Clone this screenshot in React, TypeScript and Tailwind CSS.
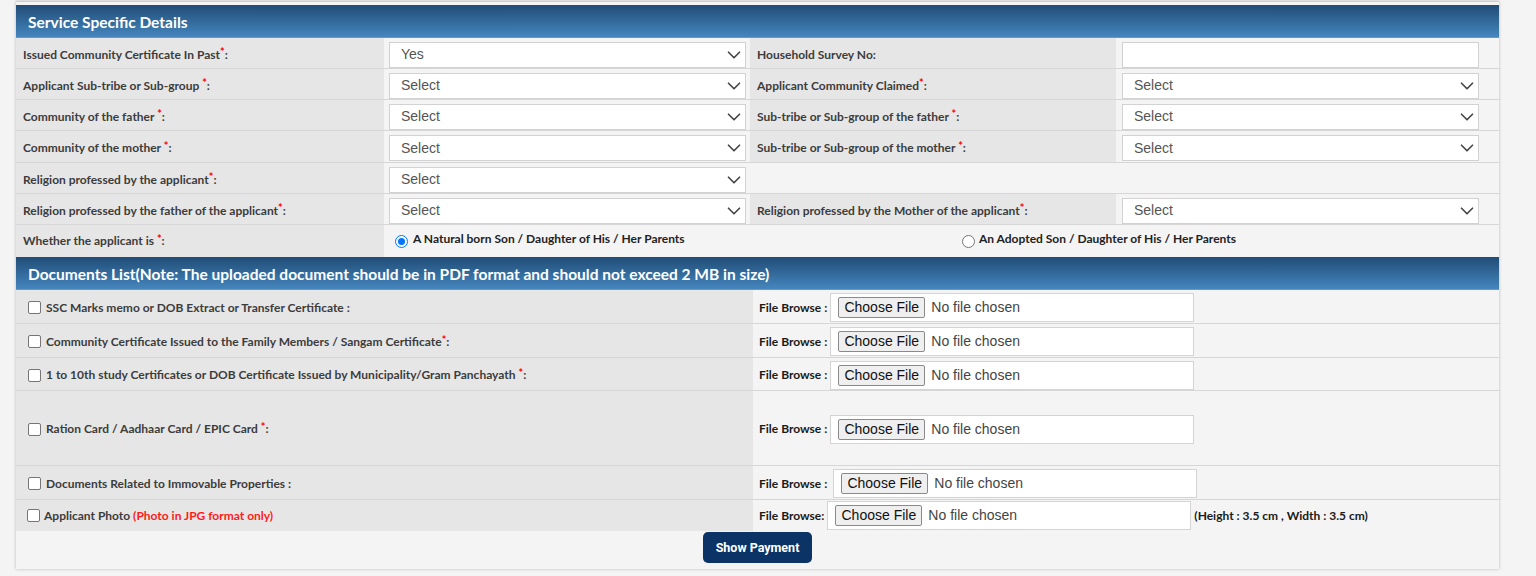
import { ChevronDown } from "lucide-react";
import type { ReactNode } from "react";

const Req = () => (
  <span className="relative -top-[2px] text-[11px] text-[#ff0000]">*</span>
);

const SelectBox = ({ value = "Select" }: { value?: string }) => (
  <div className="flex h-[26px] w-[357px] items-center justify-between border border-[#d2d2d2] bg-white pl-[11px] font-['Liberation_Sans',Arial,sans-serif] text-[14px] text-[#555]">
    <span>{value}</span>
    <ChevronDown className="h-[22px] w-[22px] text-[#444]" strokeWidth={1.8} />
  </div>
);

const Label = ({ children }: { children: ReactNode }) => (
  <div className="flex items-center bg-[#e6e6e6] pl-[7px] text-[12px] font-bold text-[#3c3c3c]">
    {children}
  </div>
);

const Value = ({ children, right }: { children?: ReactNode; right?: boolean }) => (
  <div className={right ? "flex items-center pl-[6px]" : "flex items-center pl-[5px]"}>{children}</div>
);

const Header = ({ title }: { title: string }) => (
  <div className="flex h-[33px] items-center border-b border-[#5b9bd2] bg-linear-to-b from-[#214d77] to-[#4586be] pt-[3px] pl-[12px] text-[15.5px] font-bold text-white">
    {title}
  </div>
);

const Checkbox = () => (
  <span className="h-[13px] w-[13px] shrink-0 rounded-[2px] border border-[#767676] bg-white" />
);

const FileBox = ({ label = "File Browse :", gap = "ml-[3px]" }: { label?: string; gap?: string }) => (
  <div className="flex items-center pl-[6px]">
    <span className="text-[12px] font-bold whitespace-pre text-[#1a1a1a]">{label}</span>
    <div className={`${gap} flex h-[29px] w-[364px] items-center border border-[#d4d4d4] bg-white pl-[7px] font-['Liberation_Sans',Arial,sans-serif] text-[14px]`}>
      <span className="flex h-[21px] w-[87px] items-center justify-center rounded-[2px] border border-[#8a8a8a] bg-[#efefef] text-[#111]">
        Choose File
      </span>
      <span className="ml-[6px] text-[#444]">No file chosen</span>
    </div>
  </div>
);

// cells fill the row; bg lives on the label cells
const rowCls = "grid grid-cols-[368px_366px_366px_383px] border-b border-[#d6d6d6] [&>*]:pt-[3px]";

const docs: { label: ReactNode; h: string; file?: ReactNode }[] = [
  { label: <>SSC Marks memo or DOB Extract or Transfer Certificate :</>, h: "h-[34px]" },
  { label: <>Community Certificate Issued to the Family Members / Sangam Certificate<Req />:</>, h: "h-[34px]" },
  { label: <>1 to 10th study Certificates or DOB Certificate Issued by Municipality/Gram Panchayath <Req />:</>, h: "h-[33px]" },
  { label: <>Ration Card / Aadhaar Card / EPIC Card <Req />:</>, h: "h-[75px]" },
  {
    label: <>Documents Related to Immovable Properties :</>,
    h: "h-[34px]",
    file: <FileBox label="File Browse :" gap="ml-[6px]" />,
  },
];

export default function App() {
  return (
    <div className="h-[576px] overflow-hidden bg-[#f4f4f4] pl-[16px] font-['Lato',sans-serif]">
      <div className="w-[1483px] bg-[#f4f4f4] shadow-[0_0_3px_rgba(0,0,0,0.25)]">
        <div className="mt-[1px] h-[4px] border-t border-[#cfcfcf]" />

        {/* Service details */}
        <Header title="Service Specific Details" />

        <div className={`${rowCls} h-[31px]`}>
          <Label>Issued Community Certificate In Past<Req />:</Label>
          <Value><SelectBox value="Yes" /></Value>
          <Label>Household Survey No:</Label>
          <Value right>
            <div className="h-[26px] w-[357px] border border-[#d2d2d2] bg-white" />
          </Value>
        </div>
        <div className={`${rowCls} h-[31px]`}>
          <Label>Applicant Sub-tribe or Sub-group&nbsp;<Req />:</Label>
          <Value><SelectBox /></Value>
          <Label>Applicant Community Claimed<Req />:</Label>
          <Value right><SelectBox /></Value>
        </div>
        <div className={`${rowCls} h-[31px]`}>
          <Label>Community of the father&nbsp;<Req />:</Label>
          <Value><SelectBox /></Value>
          <Label>Sub-tribe or Sub-group of the father&nbsp;<Req />:</Label>
          <Value right><SelectBox /></Value>
        </div>
        <div className={`${rowCls} h-[32px]`}>
          <Label>Community of the mother&nbsp;<Req />:</Label>
          <Value><SelectBox /></Value>
          <Label>Sub-tribe or Sub-group of the mother&nbsp;<Req />:</Label>
          <Value right><SelectBox /></Value>
        </div>
        <div className={`${rowCls} h-[31px]`}>
          <Label>Religion professed by the applicant<Req />:</Label>
          <Value><SelectBox /></Value>
          <div />
          <div />
        </div>
        <div className={`${rowCls} h-[31px]`}>
          <Label>Religion professed by the father of the applicant<Req />:</Label>
          <Value><SelectBox /></Value>
          <Label>Religion professed by the Mother of the applicant<Req />:</Label>
          <Value right><SelectBox /></Value>
        </div>
        <div className="flex h-[32px]">
          <div className="flex w-[368px] items-center bg-[#e6e6e6] pl-[7px] text-[12px] font-bold text-[#3c3c3c]">
            Whether the applicant is&nbsp;<Req />:
          </div>
          <div className="flex w-[566px] items-center pb-[4px] pl-[11px]">
            <div className="flex items-start gap-[5px]">
              <span className="mt-[4px] flex h-[13px] w-[13px] items-center justify-center rounded-full border-[1.5px] border-[#0075ff] bg-white">
                <span className="h-[7px] w-[7px] rounded-full bg-[#0075ff]" />
              </span>
              <span className="text-[12px] leading-[15px] font-bold text-[#222]">
                A Natural born Son / Daughter of His / Her Parents
              </span>
            </div>
          </div>
          <div className="flex items-center pb-[4px] pl-[12px]">
            <div className="flex items-start gap-[4px]">
              <span className="mt-[4px] h-[13px] w-[13px] rounded-full border border-[#767676] bg-white" />
              <span className="text-[12px] leading-[15px] font-bold text-[#222]">
                An Adopted Son / Daughter of His / Her Parents
              </span>
            </div>
          </div>
        </div>

        {/* Documents */}
        <Header title="Documents List(Note: The uploaded document should be in PDF format and should not exceed 2 MB in size)" />

        {docs.map((d, i) => (
          <div key={i} className={`grid grid-cols-[737px_746px] border-b border-[#d6d6d6] [&>*]:pt-[2px] ${d.h}`}>
            <div className="flex items-center gap-[5px] bg-[#e6e6e6] pl-[12px] text-[12px] font-bold text-[#3c3c3c]">
              <Checkbox />
              <span>{d.label}</span>
            </div>
            {d.file ?? <FileBox />}
          </div>
        ))}
        <div className="grid h-[31px] grid-cols-[737px_746px]">
          <div className="flex items-center gap-[4px] bg-[#e6e6e6] pl-[11px] text-[12px] font-bold text-[#3c3c3c]">
            <Checkbox />
            <span>
              Applicant Photo <span className="text-[#ff1a1a]">(Photo in JPG format only)</span>
            </span>
          </div>
          <div className="flex items-center">
            <FileBox label="File Browse:" />
            <span className="ml-[3px] text-[12px] font-bold text-[#1a1a1a]">
              (Height : 3.5 cm , Width : 3.5 cm)
            </span>
          </div>
        </div>

        <div className="flex h-[38px] items-start justify-center pt-[1px]">
          <button className="h-[31px] w-[109px] rounded-[5px] bg-[#0b3366] pt-[2px] font-['Roboto',sans-serif] text-[12.5px] font-bold text-white">
            Show Payment
          </button>
        </div>
      </div>
    </div>
  );
}
